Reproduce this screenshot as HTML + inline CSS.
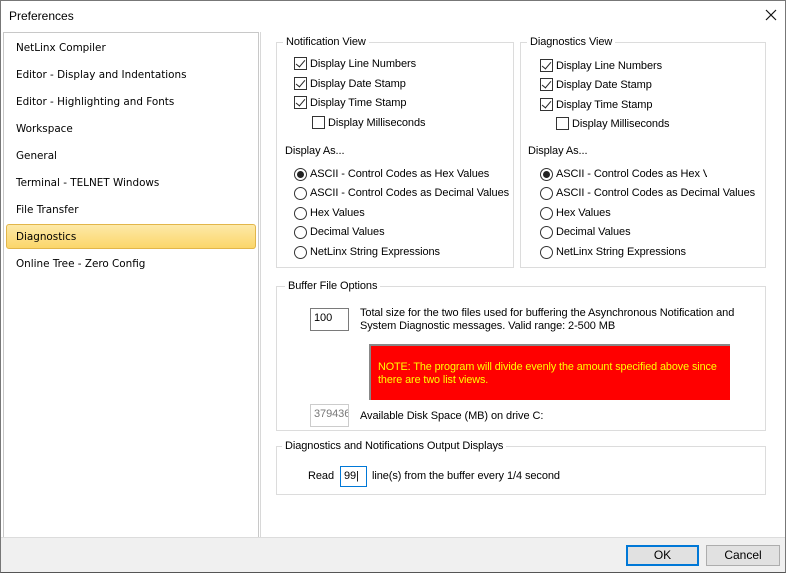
<!DOCTYPE html>
<html><head><style>
*{margin:0;padding:0;box-sizing:border-box}
body{width:786px;height:573px;position:relative;background:#fff;font-family:"Liberation Sans",sans-serif;font-size:11px;letter-spacing:-0.08px;color:#000;overflow:hidden}
.a{position:absolute;white-space:nowrap}
.t{margin-top:1px}
.win{position:absolute;left:0;top:0;width:786px;height:573px;border:1px solid #777;border-bottom-color:#555}
.list{position:absolute;left:3px;top:32px;width:256px;height:506px;border:1px solid #c8c8c8;border-bottom:none}
.li{font-family:"DejaVu Sans","Liberation Sans",sans-serif;font-size:10.4px;letter-spacing:0;margin-top:1px}
.sel{position:absolute;left:6px;top:224px;width:250px;height:25px;border:1px solid #e2b64a;border-radius:3px;background:linear-gradient(#fde9a8,#fbd66a)}
.grp{position:absolute;border:1px solid #dcdcdc}
.gl{position:absolute;top:-7px;left:6px;background:#fff;padding:0 3px}
.cb{position:absolute;width:13px;height:13px;border:1px solid #333;background:#fff}
.cb.c::after{content:"";position:absolute;left:3px;top:0px;width:4px;height:8px;border:solid #222;border-width:0 1.3px 1.3px 0;transform:rotate(40deg)}
.rb{position:absolute;width:13px;height:13px;border:1px solid #333;border-radius:50%;background:#fff}
.rb.c::after{content:"";position:absolute;left:2px;top:2px;width:7px;height:7px;border-radius:50%;background:#222}
.tb{position:absolute;border:1px solid #7a7a7a;background:#fff;padding:3px 3px}
.btn{position:absolute;background:#e1e1e1;border:1px solid #adadad;text-align:center;line-height:18px;font-size:12px;letter-spacing:0}
</style></head><body>
<div class="win"></div>
<div class="a" style="left:9px;top:9px;font-size:12px;letter-spacing:0">Preferences</div>
<svg class="a" style="left:765px;top:9px" width="12" height="12"><path d="M1 1L11 11M11 1L1 11" stroke="#111" stroke-width="1.2"/></svg>
<div class="list"></div>
<div class="a" style="left:260px;top:32px;width:1px;height:506px;background:#d8d8d8"></div>
<div class="sel"></div>
<div class="a li" style="left:16px;top:41px">NetLinx Compiler</div>
<div class="a li" style="left:16px;top:68px">Editor - Display and Indentations</div>
<div class="a li" style="left:16px;top:95px">Editor - Highlighting and Fonts</div>
<div class="a li" style="left:16px;top:122px">Workspace</div>
<div class="a li" style="left:16px;top:149px">General</div>
<div class="a li" style="left:16px;top:176px">Terminal - TELNET Windows</div>
<div class="a li" style="left:16px;top:203px">File Transfer</div>
<div class="a li" style="left:16px;top:230px">Diagnostics</div>
<div class="a li" style="left:16px;top:257px">Online Tree - Zero Config</div>

<div class="grp" style="left:276px;top:42px;width:238px;height:226px"><div class="gl">Notification View</div></div>
<div class="cb c" style="left:294px;top:57px"></div><div class="a t" style="left:310px;top:57px">Display Line Numbers</div>
<div class="cb c" style="left:294px;top:77px"></div><div class="a t" style="left:310px;top:77px">Display Date Stamp</div>
<div class="cb c" style="left:294px;top:96px"></div><div class="a t" style="left:310px;top:96px">Display Time Stamp</div>
<div class="cb" style="left:312px;top:116px"></div><div class="a t" style="left:328px;top:116px">Display Milliseconds</div>
<div class="a t" style="left:285px;top:144px">Display As...</div>
<div class="rb c" style="left:294px;top:168px"></div><div class="a t" style="left:310px;top:167px">ASCII - Control Codes as Hex Values</div>
<div class="rb" style="left:294px;top:187px"></div><div class="a t" style="left:310px;top:186px">ASCII - Control Codes as Decimal Values</div>
<div class="rb" style="left:294px;top:207px"></div><div class="a t" style="left:310px;top:206px">Hex Values</div>
<div class="rb" style="left:294px;top:226px"></div><div class="a t" style="left:310px;top:225px">Decimal Values</div>
<div class="rb" style="left:294px;top:246px"></div><div class="a t" style="left:310px;top:245px">NetLinx String Expressions</div>

<div class="grp" style="left:520px;top:42px;width:246px;height:226px"><div class="gl">Diagnostics View</div></div>
<div class="cb c" style="left:540px;top:59px"></div><div class="a t" style="left:556px;top:59px">Display Line Numbers</div>
<div class="cb c" style="left:540px;top:78px"></div><div class="a t" style="left:556px;top:78px">Display Date Stamp</div>
<div class="cb c" style="left:540px;top:98px"></div><div class="a t" style="left:556px;top:98px">Display Time Stamp</div>
<div class="cb" style="left:556px;top:117px"></div><div class="a t" style="left:572px;top:117px">Display Milliseconds</div>
<div class="a t" style="left:528px;top:144px">Display As...</div>
<div class="rb c" style="left:540px;top:168px"></div><div class="a t" style="left:556px;top:167px;width:151px;overflow:hidden">ASCII - Control Codes as Hex Values</div>
<div class="rb" style="left:540px;top:187px"></div><div class="a t" style="left:556px;top:186px">ASCII - Control Codes as Decimal Values</div>
<div class="rb" style="left:540px;top:207px"></div><div class="a t" style="left:556px;top:206px">Hex Values</div>
<div class="rb" style="left:540px;top:226px"></div><div class="a t" style="left:556px;top:225px">Decimal Values</div>
<div class="rb" style="left:540px;top:246px"></div><div class="a t" style="left:556px;top:245px">NetLinx String Expressions</div>

<div class="grp" style="left:276px;top:286px;width:490px;height:145px"><div class="gl" style="left:8px">Buffer File Options</div></div>
<div class="tb" style="left:310px;top:308px;width:39px;height:23px">100</div>
<div class="a" style="left:360px;top:307px;line-height:13px">Total size for the two files used for buffering the Asynchronous Notification and<br>System Diagnostic messages. Valid range: 2-500 MB</div>
<div class="a" style="left:369px;top:344px;width:361px;height:56px;background:#f00;border-top:2px solid #888;border-left:2px solid #888;color:#ff0;font-size:10.8px;line-height:13px;padding:15px 10px 0 7px;white-space:normal">NOTE: The program will divide evenly the amount specified above since there are two list views.</div>
<div class="tb" style="left:310px;top:404px;width:39px;height:23px;border-color:#ccc;color:#777;overflow:hidden">379436</div>
<div class="a t" style="left:360px;top:409px">Available Disk Space (MB) on drive C:</div>

<div class="grp" style="left:276px;top:446px;width:490px;height:49px"><div class="gl" style="left:5px">Diagnostics and Notifications Output Displays</div></div>
<div class="a t" style="left:308px;top:469px">Read</div>
<div class="tb" style="left:340px;top:466px;width:27px;height:21px;border-color:#0078d7;padding-top:3px">99|</div>
<div class="a t" style="left:372px;top:469px">line(s) from the buffer every 1/4 second</div>

<div class="a" style="left:1px;top:537px;width:784px;height:35px;background:#f0f0f0;border-top:1px solid #dcdcdc"></div>
<div class="btn" style="left:626px;top:545px;width:73px;height:21px;border:2px solid #0078d7;line-height:17px">OK</div>
<div class="btn" style="left:706px;top:545px;width:74px;height:21px">Cancel</div>
</body></html>
